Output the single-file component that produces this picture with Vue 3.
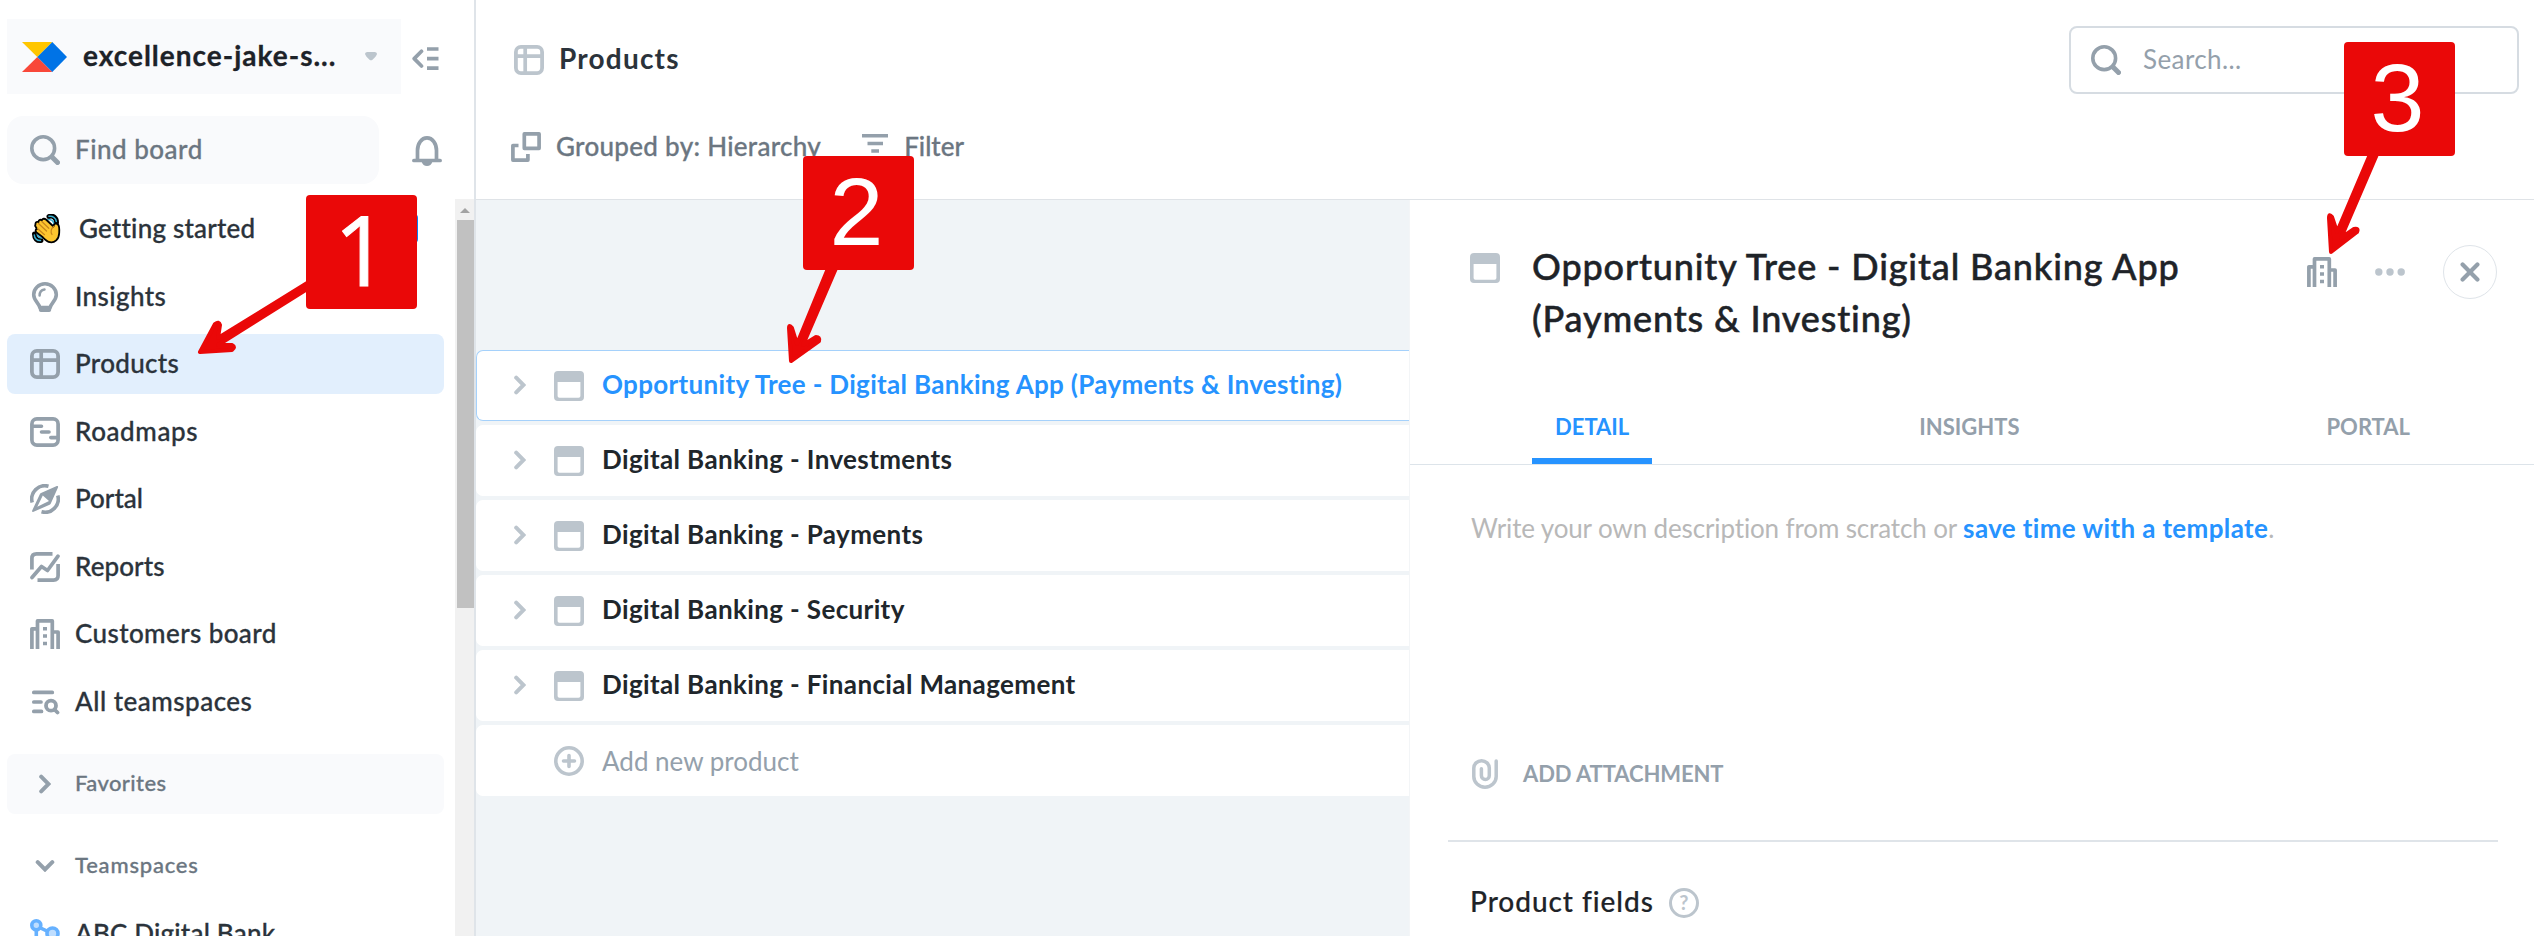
<script setup>
import { ref } from 'vue'

const navItems = [
  { id: 'start', label: 'Getting started', track: 0.2 },
  { id: 'bulb', label: 'Insights', track: 0.4 },
  { id: 'board', label: 'Products', track: 0.3 },
  { id: 'roadmap', label: 'Roadmaps', track: 0.6 },
  { id: 'compass', label: 'Portal', track: 0 },
  { id: 'chart', label: 'Reports', track: 0.1 },
  { id: 'building', label: 'Customers board', track: 0.4 },
  { id: 'teams', label: 'All teamspaces', track: 0.5 },
]
const activeNav = ref('board')

const products = [
  'Opportunity Tree - Digital Banking App (Payments & Investing)',
  'Digital Banking - Investments',
  'Digital Banking - Payments',
  'Digital Banking - Security',
  'Digital Banking - Financial Management',
]
const selected = ref(0)

const tabs = ['Detail', 'Insights', 'Portal']
const activeTab = ref('Detail')
</script>

<template>
  <svg class="sprite" aria-hidden="true">
    <symbol id="search" viewBox="0 0 30 30">
      <circle cx="13.2" cy="13.2" r="11.4" fill="none" stroke="currentColor" stroke-width="3.6" />
      <path d="M22.5 22.5l5 5" stroke="currentColor" stroke-width="5" stroke-linecap="round" />
    </symbol>
    <symbol id="start" viewBox="0 0 30 30">
      <g stroke-linejoin="round" stroke-linecap="round">
        <path d="M17 2.500C21 1 24.500 4 24.500 8.500M2.500 20C2.500 24.500 5 27 9 26.500" fill="none" stroke="#000" stroke-width="5" />
        <path d="M17 2.300C20.500 1.500 24 4 24.300 7.500M2.300 21C2.500 24.500 5 26.700 8.500 26.500M16 5.500C19 5 21.500 7 21.800 9.500M5 19.500C5.500 22 7 23.500 9.500 24" fill="none" stroke="#3ab0d0" stroke-width="1.500" />
        <path d="M3.500 10C3.500 8 5 7.500 6.500 8C6.500 6 8 5.200 9.800 6.200C10.500 4.500 12.500 4.300 14 5.500L21.500 12.500C21.500 10 24 8.500 26 10.500C27.500 12 27.500 14 27.200 19C27 25.500 22.500 29 18 28.200C15 27.700 13 25.500 10.500 23L4.500 18.500C3 17 3.500 15 5 15L3.800 13C3 12 3 11 3.500 10z" fill="#fdc52f" stroke="#000" stroke-width="1.800" />
        <path d="M9.800 7.500l7 6.800M6.500 9.500l8 7.500M5.500 14.500l7 6.200M21.500 12.500C18.500 15.500 18.500 18 20 20.500" fill="none" stroke="#c8861c" stroke-width="1.200" />
      </g>
    </symbol>
    <symbol id="bulb" viewBox="0 0 30 30">
      <path d="M9.800 25.500C9 21 3.700 18.500 3.700 12.700A11.300 10.900 0 0 1 26.300 12.700C26.300 18.500 21 21 20.200 25.500z" fill="none" stroke="currentColor" stroke-width="3.600" stroke-linejoin="round" />
      <path d="M8.200 24.500h13.600l-.8 4q-.4 1.500-2 1.500h-8q-1.600 0-2-1.500z" fill="currentColor" />
      <path d="M9.600 13.500C9.600 10 11.500 8 14.500 7.500" fill="none" stroke="currentColor" stroke-width="2.500" stroke-linecap="round" />
    </symbol>
    <symbol id="board" viewBox="0 0 30 30">
      <rect x="1.900" y="1.900" width="26.200" height="26.200" rx="5" fill="none" stroke="currentColor" stroke-width="3.800" />
      <path d="M11.200 3v24M3 11.200h24" stroke="currentColor" stroke-width="3.700" />
    </symbol>
    <symbol id="roadmap" viewBox="0 0 30 30">
      <rect x="1.900" y="1.900" width="26.200" height="26.200" rx="5" fill="none" stroke="currentColor" stroke-width="3.700" />
      <path d="M3 9.300h8.500M11.500 15h7.500M20.800 20.600H27" stroke="currentColor" stroke-width="3.600" stroke-linecap="round" />
    </symbol>
    <symbol id="compass" viewBox="0 0 30 30">
      <path d="M18.500 2.200A13.300 13.300 0 0 0 2.200 18.500M27.800 11.500A13.300 13.300 0 0 1 11.500 27.800" fill="none" stroke="currentColor" stroke-width="3.600" />
      <path fill-rule="evenodd" d="M26.800 2.100Q28.500 1.600 28 3.400L20.800 19.500Q20.500 20.300 19.600 20.700L3.600 27.800Q1.700 28.300 2.200 26.500L9.700 10.400Q10.100 9.500 11 9.100zM12.800 11.500L7.300 22.800L19 17z" fill="currentColor" />
    </symbol>
    <symbol id="chart" viewBox="0 0 30 30">
      <path d="M22.500 1.900H6.500Q1.900 1.900 1.900 6.500V17.500M28.100 12V23.500Q28.100 28.100 23.500 28.100H7.500" fill="none" stroke="currentColor" stroke-width="3.700" />
      <path d="M2 25.500L11.500 14.500L17.500 18.500L28 4.200" fill="none" stroke="currentColor" stroke-width="3.700" stroke-linejoin="round" stroke-linecap="round" />
    </symbol>
    <symbol id="building" viewBox="0 0 30 30">
      <path d="M1.900 30V9.800H6M7.500 30V1.900H22.300V30M28.100 30V13H24" fill="none" stroke="currentColor" stroke-width="3.700" stroke-linejoin="round" />
      <path d="M13 8h4v3.500h-4zM13 15.200h4v3.500h-4zM13 22.800h4v3.500h-4z" fill="currentColor" />
    </symbol>
    <symbol id="teams" viewBox="0 0 30 30">
      <path d="M3.800 5.400H22.300M3.800 15H11M3.800 24.400H11.500" stroke="currentColor" stroke-width="3.700" stroke-linecap="round" />
      <circle cx="21" cy="18.700" r="5" fill="none" stroke="currentColor" stroke-width="3.800" />
      <path d="M24.500 22.500l3 3" stroke="currentColor" stroke-width="3.800" stroke-linecap="round" />
    </symbol>
    <symbol id="bell" viewBox="0 0 30 30">
      <path d="M5.500 24V14.500C5.500 7.500 9.500 1.900 15 1.900S24.500 7.500 24.500 14.500V24" fill="none" stroke="currentColor" stroke-width="3.700" />
      <path d="M1.900 24.500H28.100" stroke="currentColor" stroke-width="3.700" stroke-linecap="round" />
      <path d="M9.500 25.500H20.500Q19 30 15 30T9.500 25.500z" fill="currentColor" />
    </symbol>
    <symbol id="window" viewBox="0 0 30 30">
      <path fill-rule="evenodd" d="M4 0H26Q30 0 30 4V26Q30 30 26 30H4Q0 30 0 26V4Q0 0 4 0zM3.600 11V25Q3.600 26.800 5.400 26.800H24.600Q26.400 26.800 26.400 25V11z" fill="currentColor" />
    </symbol>
    <symbol id="chevron" viewBox="0 0 12 20">
      <path d="M2.200 2.700L9.500 10L2.200 17.300" fill="none" stroke="currentColor" stroke-width="4" stroke-linecap="round" />
    </symbol>
  </svg>

  <main class="app">
    <aside class="sidebar">
      <div class="workspace-row">
        <div class="workspace">
          <svg class="logo" viewBox="0 0 45 30">
            <path d="M0 0H30.300L15.300 15z" fill="#ffc600" />
            <path d="M0 30H30.300L15.300 15z" fill="#f94839" />
            <path d="M30.300 0L45 15L30.300 30L15.300 15z" fill="#0073e6" />
          </svg>
          <span class="workspace-name">excellence-jake-s...</span>
          <svg class="caret" viewBox="0 0 12 9">
            <path d="M2 0H10Q12 .3 12 2Q11.500 4 7.500 7.700Q6 9 4.500 7.700Q.5 4 0 2Q0 .3 2 0z" fill="#bcc5cd" />
          </svg>
        </div>
        <svg class="collapse" viewBox="0 0 27 23" fill="none" stroke="currentColor" stroke-width="3.700">
          <path d="M9.500 4.200L2.200 11.600L9.500 19" stroke-linecap="round" stroke-linejoin="round" />
          <path d="M15 2H26.500M15 11.600H26.500M15 21.100H26.500" />
        </svg>
      </div>

      <div class="find-row">
        <div class="find">
          <svg class="icon"><use href="#search" /></svg>
          <span>Find board</span>
        </div>
        <svg class="icon bell"><use href="#bell" /></svg>
      </div>

      <div class="scroll-area">
        <nav>
          <a v-for="item in navItems" :key="item.id" class="nav-item" :class="{ active: item.id === activeNav, start: item.id === 'start' }" @click="activeNav = item.id">
            <svg class="icon"><use :href="'#' + item.id" /></svg>
            <span :style="{ letterSpacing: item.track + 'px' }">{{ item.label }}</span>
          </a>
          <div class="nav-group favorites">
            <svg class="chev"><use href="#chevron" /></svg>
            <span>Favorites</span>
          </div>
          <div class="nav-group">
            <svg class="chev down"><use href="#chevron" /></svg>
            <span class="wide">Teamspaces</span>
          </div>
          <a class="nav-item space">
            <svg class="icon" viewBox="0 0 30 30" fill="#bfdeff" stroke="#66b1ff" stroke-width="3.600">
              <path d="M6.300 7V22M6.300 7L22 14.500V24H7" fill="none" />
              <circle cx="6.300" cy="6.300" r="4.500" />
              <circle cx="22.500" cy="14.500" r="5.500" />
              <circle cx="7" cy="24" r="4.500" />
            </svg>
            <span>ABC Digital Bank</span>
          </a>
        </nav>
        <div class="scrollbar">
          <i class="scroll-up"></i>
          <div class="thumb"></div>
        </div>
      </div>
    </aside>

    <section class="content">
      <header>
        <div class="top-row">
          <svg class="icon light"><use href="#board" /></svg>
          <h1>Products</h1>
          <div class="search">
            <svg class="icon"><use href="#search" /></svg>
            <span>Search...</span>
          </div>
        </div>
        <div class="tools">
          <svg class="icon" viewBox="0 0 30 30" fill="none" stroke="currentColor" stroke-width="3.700" stroke-linejoin="round">
            <path d="M13.300 1.900H28.100V16.300H13.300z" />
            <path d="M7.500 13.500H1.900V28.100H16.900V22" />
          </svg>
          <span class="grouped">Grouped by: Hierarchy</span>
          <svg class="filter" viewBox="0 0 26 26" stroke="currentColor" stroke-width="3.500">
            <path d="M0 1.800H26M5.500 9.500H21M9.300 17H17M11.500 24.500H15" />
          </svg>
          <span>Filter</span>
        </div>
      </header>

      <div class="body">
        <div class="list">
          <div v-for="(name, i) in products" :key="name" class="row" :class="{ selected: i === selected }" @click="selected = i">
            <svg class="row-chev"><use href="#chevron" /></svg>
            <svg class="icon light"><use href="#window" /></svg>
            <span>{{ name }}</span>
          </div>
          <div class="row add">
            <svg class="icon light" viewBox="0 0 30 30" fill="none" stroke="currentColor" stroke-width="3.600">
              <circle cx="15" cy="15" r="13.200" />
              <path d="M15 9.500V20.500M9.500 15H20.500" stroke-linecap="round" />
            </svg>
            <span>Add new product</span>
          </div>
        </div>

        <aside class="panel">
          <div class="panel-head">
            <svg class="icon light"><use href="#window" /></svg>
            <h2>Opportunity Tree - Digital Banking App (Payments &amp; Investing)</h2>
            <div class="actions">
              <svg class="icon"><use href="#building" /></svg>
              <svg class="dots" viewBox="0 0 30 8" fill="#bcc5cd">
                <circle cx="3.800" cy="4" r="3.700" /><circle cx="15" cy="4" r="3.700" /><circle cx="26.200" cy="4" r="3.700" />
              </svg>
              <button class="close">
                <svg viewBox="0 0 20 20"><path d="M2.600 2.600L17.400 17.400M17.400 2.600L2.600 17.400" stroke="currentColor" stroke-width="4.200" stroke-linecap="round" /></svg>
              </button>
            </div>
          </div>

          <div class="tabs">
            <a v-for="tab in tabs" :key="tab" class="tab" :class="{ current: tab === activeTab }" @click="activeTab = tab"><span>{{ tab }}</span></a>
          </div>

          <div class="panel-body">
            <p class="description">Write your own description from scratch or <a>save time with a template</a>.</p>
            <div class="attachment">
              <svg class="clip" viewBox="0 0 26 30" fill="none" stroke="#bcc5cd" stroke-width="3.500" stroke-linecap="round">
                <path d="M24.200 1.900V17.500A11.150 10.700 0 0 1 1.800 17.500V9A7.700 7.200 0 0 1 17.300 9V16.500A3.900 4 0 0 1 9.400 16.500V9.700" />
              </svg>
              <span>Add attachment</span>
            </div>
            <div class="fields">
              <h3>Product fields</h3>
              <span class="help">?</span>
            </div>
          </div>
        </aside>
      </div>
    </section>

    <!-- walkthrough callouts lie over the whole screen -->
    <div class="callouts">
      <div class="counter"></div>
      <svg class="arrows" viewBox="0 0 2534 936" fill="#ea0808" stroke="#ea0808" stroke-width="4" stroke-linejoin="round">
        <path d="M312 280L218 338L220 325Q219 321 215 324L200 352L232 350Q236 347 232 345L218 345L312 286z" />
        <path d="M829 266L797 344L792 328Q789 324 789 328L791 361L819 341Q820 337 816 337L803 345L837 266z" />
        <path d="M2371 152L2337 232L2332 217Q2329 213 2329 218L2331 252L2357 232Q2359 228 2354 229L2341 238L2378 152z" />
      </svg>
      <div class="step one">1</div>
      <div class="step two">2</div>
      <div class="step three">3</div>
    </div>
  </main>
</template>

<style>
body {
  margin: 0;
  overflow: hidden;
}
</style>

<style scoped>
* {
  box-sizing: border-box;
}

.sprite {
  position: absolute;
  width: 0;
  height: 0;
}

.app {
  position: relative;
  display: flex;
  width: 100vw;
  height: 100vh;
  overflow: hidden;
  background-color: #ffffff;
  color: #2b333b;
  font-family: Lato, "Liberation Sans", sans-serif;
  font-size: 26px;
  font-weight: 500;
  line-height: 30px;
}

svg {
  flex: none;
}

.icon {
  width: 30px;
  height: 30px;
  color: #94a0ab;
}

.light {
  color: #bcc5cd;
}

.sidebar {
  display: flex;
  flex-direction: column;
  flex: none;
  width: 476px;
  border-right: 2px solid #dfe4e9;
  -webkit-text-stroke: 0.3px;
}

.workspace-row {
  display: flex;
  align-items: center;
  gap: 11px;
  padding: 19px 0 0 7px;
}

.workspace {
  display: flex;
  align-items: center;
  width: 394px;
  height: 75px;
  padding: 0 24px 0 15px;
  background-color: #f9fafc;
}

.logo {
  width: 45px;
  height: 30px;
}

.workspace-name {
  flex: 1;
  padding: 0 0 3px 16px;
  color: #1d2228;
  font-size: 28px;
  font-weight: 700;
  letter-spacing: 1px;
}

.caret {
  width: 12px;
  height: 9px;
}

.collapse {
  width: 27px;
  height: 23px;
  margin-top: 3px;
  color: #94a0ab;
}

.find-row {
  display: flex;
  align-items: center;
  gap: 33px;
  height: 68px;
  margin: 22px 0 15px 7px;
}

.find {
  display: flex;
  align-items: center;
  gap: 15px;
  width: 372px;
  height: 68px;
  padding-left: 23px;
  border-radius: 16px;
  background-color: #f9fafc;
  color: #6b7681;
  letter-spacing: 0.5px;
}

.find span {
  padding-bottom: 2px;
}

.bell {
  margin-top: 2px;
}

.scroll-area {
  display: flex;
  flex: 1;
  min-height: 0;
  overflow: hidden;
}

nav {
  flex: 1;
  padding-left: 7px;
}

.nav-item,
.nav-group {
  display: flex;
  align-items: center;
  gap: 15px;
  width: 437px;
  height: 60px;
  margin-bottom: 7.5px;
  padding-left: 23px;
  border-radius: 8px;
  cursor: pointer;
}

.nav-item span {
  padding-bottom: 2px;
}

.nav-item.start {
  padding-left: 25px;
  gap: 17px;
}

.nav-item.active {
  background-color: #e2effd;
}

.nav-group {
  margin: 22px 0 8px;
  gap: 20px;
  padding-left: 32px;
  color: #6b7681;
  font-size: 22px;
  letter-spacing: 0.4px;
}

.nav-group span {
  padding: 0 0 1px 4px;
}

.nav-group .wide {
  letter-spacing: 0.8px;
}

.favorites {
  background-color: #f9fafc;
}

.chev {
  width: 12px;
  height: 20px;
  color: #94a0ab;
}

.down {
  transform: rotate(90deg);
}

.space {
  letter-spacing: 0.2px;
}

.scrollbar {
  display: flex;
  flex-direction: column;
  align-items: flex-end;
  width: 19px;
  background-color: #f1f1f1;
}

.scroll-up {
  margin: 9px 4px 7px;
  border: 5px solid transparent;
  border-top-width: 0;
  border-bottom-color: #a3a3a3;
}

.thumb {
  width: 17px;
  height: 388px;
  background-color: #c1c1c1;
}

.content {
  display: flex;
  flex-direction: column;
  flex: 1;
  min-width: 0;
}

header {
  height: 200px;
  padding: 26px 15px 0 35px;
  border-bottom: 1px solid #dfe3e7;
}

.top-row {
  display: flex;
  align-items: center;
  gap: 15px;
  height: 68px;
  padding-left: 3px;
}

h1 {
  flex: 1;
  margin: 0;
  padding-bottom: 4px;
  font-size: 28px;
  font-weight: 700;
  letter-spacing: 1.2px;
}

.search {
  display: flex;
  align-items: center;
  gap: 22px;
  width: 450px;
  height: 68px;
  padding-left: 20px;
  border: 2px solid #d6dce2;
  border-radius: 8px;
  color: #94a0ab;
  font-weight: 400;
  letter-spacing: 0.4px;
}

.search span {
  padding-bottom: 3px;
}

.tools {
  display: flex;
  align-items: center;
  margin-top: 37px;
  color: #6b7681;
  -webkit-text-stroke: 0.3px;
}

.tools span {
  padding: 0 0 2px 15px;
}

.tools .grouped {
  letter-spacing: 0.3px;
}

.filter {
  width: 26px;
  height: 26px;
  margin: 0 1px 0 41px;
  color: #94a0ab;
}

.body {
  display: flex;
  flex: 1;
  min-height: 0;
}

.list {
  display: flex;
  flex-direction: column;
  gap: 4px;
  width: 933px;
  padding-top: 150px;
  overflow: hidden;
  background-color: #f0f4f7;
}

.row {
  display: flex;
  flex: none;
  align-items: center;
  height: 71px;
  padding-left: 37px;
  border: 1px solid #ffffff;
  border-right: none;
  border-radius: 7px 0 0 7px;
  background-color: #ffffff;
  color: #20262b;
  font-weight: 700;
  letter-spacing: 0.37px;
  white-space: nowrap;
  cursor: pointer;
}

.row span {
  padding: 0 0 3px 18px;
}

.row-chev {
  width: 12px;
  height: 20px;
  margin: 0 28px 2px 0;
  color: #bcc5cd;
}

.row.selected {
  border-color: #a5d1fb;
  color: #2693ff;
  letter-spacing: 0.32px;
}

.row.add {
  padding-left: 77px;
  color: #94a0ab;
  font-weight: 400;
  letter-spacing: 0;
}

.row.add span {
  padding: 1px 0 0 18px;
}

.panel {
  flex: 1;
  border-left: 1px solid #f3f5f7;
}

.panel-head {
  display: flex;
  align-items: flex-start;
  height: 187px;
  padding: 40px 37px 0 60px;
}

.panel-head > .icon {
  margin-top: 13px;
}

h2 {
  width: 680px;
  margin: 0;
  padding-left: 32px;
  color: #1e2328;
  font-size: 36px;
  font-weight: 500;
  line-height: 52px;
  letter-spacing: 0.84px;
  -webkit-text-stroke: 0.5px;
}

.actions {
  display: flex;
  align-items: center;
  gap: 38px;
  height: 54px;
  margin: 5px 0 0 auto;
}

.dots {
  width: 30px;
  height: 8px;
}

.close {
  display: flex;
  align-items: center;
  justify-content: center;
  width: 54px;
  height: 54px;
  padding: 0;
  border: 1px solid #dfe4e9;
  border-radius: 50%;
  background-color: #ffffff;
  color: #94a0ab;
}

.close svg {
  width: 20px;
  height: 20px;
}

.tabs {
  display: flex;
  gap: 244px;
  height: 78px;
  padding-left: 122px;
  border-bottom: 1px solid #dde4ea;
}

.tab {
  height: 77px;
  padding: 25px 23px 0;
  border-bottom: 6px solid transparent;
  color: #94a0ab;
  font-size: 22px;
  font-weight: 700;
  text-transform: uppercase;
  cursor: pointer;
}

.tab:last-child {
  margin-left: 17px;
}

.tab.current {
  border-color: #2693ff;
  color: #2693ff;
}

.panel-body {
  padding: 48px 36px 0 38px;
}

.description {
  height: 246px;
  margin: 0;
  padding-left: 23px;
  color: #b8b8b8;
  font-weight: 400;
  letter-spacing: -0.13px;
}

.description a {
  color: #2693ff;
  font-weight: 700;
  letter-spacing: 0.36px;
}

.attachment {
  display: flex;
  gap: 25px;
  height: 83px;
  padding-left: 24px;
  border-bottom: 2px solid #dfe4e9;
  color: #94a0ab;
  font-size: 22px;
  font-weight: 700;
  letter-spacing: -0.1px;
  text-transform: uppercase;
}

.clip {
  width: 26px;
  height: 30px;
}

.fields {
  display: flex;
  align-items: center;
  gap: 15px;
  padding: 44px 0 0 22px;
}

h3 {
  margin: 0;
  padding-bottom: 4px;
  color: #1e2328;
  font-size: 28px;
  font-weight: 500;
  letter-spacing: 0.95px;
  -webkit-text-stroke: 0.2px;
}

.help {
  width: 30px;
  height: 30px;
  border: 3.5px solid #bcc5cd;
  border-radius: 50%;
  color: #bcc5cd;
  font-size: 20px;
  font-weight: 700;
  line-height: 23px;
  text-align: center;
}

.callouts,
.arrows {
  position: absolute;
  inset: 0;
  width: 2534px;
  height: 936px;
  pointer-events: none;
}

.counter {
  position: absolute;
  left: 388px;
  top: 214px;
  width: 30px;
  height: 29px;
  border-radius: 4px;
  background-color: #0a7cf0;
}

.step {
  position: absolute;
  width: 111px;
  height: 114px;
  padding-right: 4px;
  border-radius: 4px;
  background-color: #ea0808;
  color: #ffffff;
  font-family: "Liberation Sans", Arial, sans-serif;
  font-size: 97px;
  font-weight: 400;
  line-height: 111px;
  text-align: center;
}

/* Open Sans draws the 1 without a foot */
.one {
  left: 306px;
  top: 195px;
  padding-right: 0;
  font-family: "Open Sans", sans-serif;
  line-height: 106px;
  -webkit-text-stroke: 1px;
}

.two {
  left: 803px;
  top: 156px;
}

.three {
  left: 2344px;
  top: 42px;
}
</style>
